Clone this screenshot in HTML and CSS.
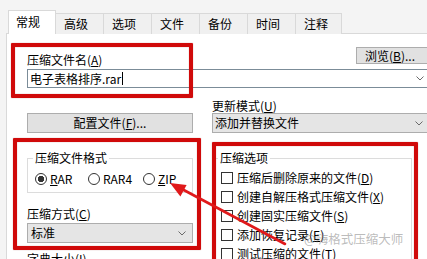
FILE: index.html
```html
<!DOCTYPE html>
<html lang="zh-CN">
<head>
<meta charset="utf-8">
<title>压缩文件名和参数</title>
<link rel="stylesheet" href="styles.css">
</head>
<body>
<div class="window">
  <div class="tabs">
    <div class="tab active">常规</div>
    <div class="tab">高级</div>
    <div class="tab">选项</div>
    <div class="tab">文件</div>
    <div class="tab">备份</div>
    <div class="tab">时间</div>
    <div class="tab last">注释</div>
  </div>
  <div class="panel">
    <div class="name-row">
      <div class="lbl name-lbl">压缩文件名(<u>A</u>)</div>
      <button class="btn browse">浏览(<u>B</u>)...</button>
    </div>
    <div class="combo name-input">
      <span class="value">电子表格排序.rar</span><span class="caret"></span>
      <svg class="chev" width="8" height="5" viewBox="0 0 8 5"><polyline points="0.5,0.5 4,4 7.5,0.5" fill="none" stroke="#6a6a6a" stroke-width="1"/></svg>
    </div>
    <div class="cols">
      <div class="col left">
        <button class="btn profile">配置文件(<u>F</u>)...</button>
        <fieldset class="group fmt">
          <legend>压缩文件格式</legend>
          <div class="radios">
            <span class="radio on"><i></i><span><u>R</u>AR</span></span>
            <span class="radio"><i></i><span>RAR4</span></span>
            <span class="radio"><i></i><span><u>Z</u>IP</span></span>
          </div>
        </fieldset>
        <div class="lbl method-lbl">压缩方式(<u>C</u>)</div>
        <div class="combo select method">
          <span class="value">标准</span>
          <svg class="chev" width="8" height="5" viewBox="0 0 8 5"><polyline points="0.5,0.5 4,4 7.5,0.5" fill="none" stroke="#6a6a6a" stroke-width="1"/></svg>
        </div>
        <div class="lbl dict-lbl">字典大小(<u>I</u>)</div>
      </div>
      <div class="col right">
        <div class="lbl update-lbl">更新模式(<u>U</u>)</div>
        <div class="combo select update">
          <span class="value">添加并替换文件</span>
          <svg class="chev" width="8" height="5" viewBox="0 0 8 5"><polyline points="0.5,0.5 4,4 7.5,0.5" fill="none" stroke="#6a6a6a" stroke-width="1"/></svg>
        </div>
        <fieldset class="group opts">
          <legend>压缩选项</legend>
          <div class="check"><i></i><span>压缩后删除原来的文件(<u>D</u>)</span></div>
          <div class="check"><i></i><span>创建自解压格式压缩文件(<u>X</u>)</span></div>
          <div class="check"><i></i><span>创建固实压缩文件(<u>S</u>)</span></div>
          <div class="check"><i></i><span>添加恢复记录(<u>E</u>)</span></div>
          <div class="check"><i></i><span>测试压缩的文件(<u>T</u>)</span></div>
        </fieldset>
      </div>
    </div>
  </div>

  <div class="mark mark-name"></div>
  <div class="mark mark-format"></div>
  <div class="mark mark-options"></div>

  <div class="watermark">@嗨格式压缩大师</div>

  <svg class="arrow" width="427" height="259" viewBox="0 0 427 259">
    <line x1="285" y1="244" x2="180" y2="188" stroke="#e0191b" stroke-width="2.6" stroke-linecap="round"/>
    <polygon points="170,183 180.4,196.4 186.6,184.9" fill="#e0191b"/>
  </svg>
</div>
</body>
</html>
```

FILE: styles.css
```css
* { box-sizing: border-box; }

html, body {
  margin: 0;
  padding: 0;
}

body {
  font-family: "Noto Sans CJK SC", "Noto Sans", "Liberation Sans", sans-serif;
  font-size: 12px;
  color: #000;
  background: #fff;
}

.window {
  position: relative;
  width: 427px;
  height: 259px;
  overflow: hidden;
  background: #f4f4f4;
}

u { text-decoration: underline; text-underline-offset: 1px; }

/* tabs */
.tabs {
  display: flex;
  align-items: flex-end;
  height: 34px;
  padding: 10px 0 0 8px;
}

.tab {
  width: 49px;
  height: 21px;
  margin-left: -1px;
  padding: 3px 0 0 8px;
  line-height: 14px;
  background: #f0f0f0;
  border: 1px solid #d9d9d9;
  border-bottom: 0;
  white-space: nowrap;
}

.tab.active {
  position: relative;
  z-index: 1;
  width: 48px;
  height: 24px;
  margin-left: 0;
  padding: 3px 0 0 7px;
  line-height: 16px;
  background: #fff;
}

.tab.last { width: 47px; }

/* panel */
.panel {
  margin: -1px 0 0 6px;
  width: 426px;
  height: 230px;
  padding-left: 20px;
  background: #fff;
  border-top: 1px solid #d9d9d9;
  border-left: 1px solid #d9d9d9;
}

.lbl {
  line-height: 14px;
  white-space: nowrap;
}

.name-row {
  display: flex;
  justify-content: space-between;
  align-items: flex-start;
  height: 20px;
  margin-top: 13px;
}

.name-lbl { align-self: flex-end; }

.btn {
  font: inherit;
  color: #000;
  background: #e1e1e1;
  border: 1px solid #adadad;
  padding: 0;
  margin: 0;
  white-space: nowrap;
}

.browse {
  width: 76px;
  height: 17px;
  line-height: 15px;
  padding-right: 8px;
}

.combo {
  display: flex;
  align-items: center;
  white-space: nowrap;
}

.combo .chev { margin-left: auto; flex: none; }

.name-input {
  margin-top: 2px;
  width: 405px;
  height: 19px;
  padding-left: 2px;
  border: 1px solid #7b8c98;
  background: #fff;
  line-height: 17px;
}

.name-input .chev { margin-right: 7px; }

.caret {
  display: inline-block;
  width: 1px;
  height: 13px;
  margin-left: 1px;
  background: #000;
}

.cols {
  display: flex;
  gap: 19px;
}

.col { display: flex; flex-direction: column; }
.col.left { width: 166px; }
.col.right { width: 220px; }

.profile {
  margin-top: 25px;
  width: 166px;
  height: 20px;
  line-height: 18px;
  text-align: center;
}

.group {
  margin: 19px 0 0 0;
  border: 1px solid #dcdcdc;
  min-width: 0;
}

.group legend {
  margin-left: -2px;
  padding: 0 2px;
  line-height: 12px;
  white-space: nowrap;
}

.fmt {
  width: 166px;
  padding: 0 0 7px 7px;
}

.radios {
  display: grid;
  grid-template-columns: 53px 55px auto;
  margin-top: 8px;
  height: 13px;
}

.radio {
  display: flex;
  align-items: center;
  gap: 3px;
  line-height: 13px;
}

.radio i {
  flex: none;
  width: 12px;
  height: 12px;
  border: 1px solid #333;
  border-radius: 50%;
  background: #fff;
}

.radio.on i {
  background: radial-gradient(circle at center, #333 0 2.9px, #fff 3.5px);
}

.method-lbl { margin-top: 14px; }

.select {
  height: 20px;
  padding-left: 3px;
  background: #e5e5e5;
  border: 1px solid #adadad;
  line-height: 18px;
}

.method {
  margin-top: 2px;
  width: 166px;
}

.method .chev { margin-right: 6px; }

.dict-lbl { margin-top: 9px; }

.update-lbl { margin-top: 11px; }

.update {
  width: 220px;
  padding-left: 2px;
}

.update .chev { margin-right: 8px; }

.opts {
  width: 200px;
  padding: 4px 0 0 7px;
}

.check {
  display: flex;
  align-items: center;
  gap: 4px;
  height: 19px;
  padding-left: 1px;
  white-space: nowrap;
  line-height: 14px;
}

.check i {
  flex: none;
  width: 12px;
  height: 12px;
  border: 1px solid #333;
  background: #fff;
}

/* annotation overlays */
.mark {
  position: absolute;
  border: 4px solid #d00a0a;
  box-shadow: 0 0 1px rgba(120, 0, 0, 0.6), inset 0 0 1px rgba(120, 0, 0, 0.6);
  border-radius: 1px;
}

.mark-name { left: 11px; top: 43px; width: 182px; height: 55px; }
.mark-format { left: 13px; top: 138px; width: 188px; height: 112px; }
.mark-options { left: 212px; top: 142px; width: 206px; height: 130px; }

.watermark {
  position: absolute;
  left: 304px;
  top: 232px;
  font-size: 12.5px;
  line-height: 14px;
  color: rgba(130, 130, 130, 0.55);
  white-space: nowrap;
}

.arrow {
  position: absolute;
  left: 0;
  top: 0;
  pointer-events: none;
}
```
